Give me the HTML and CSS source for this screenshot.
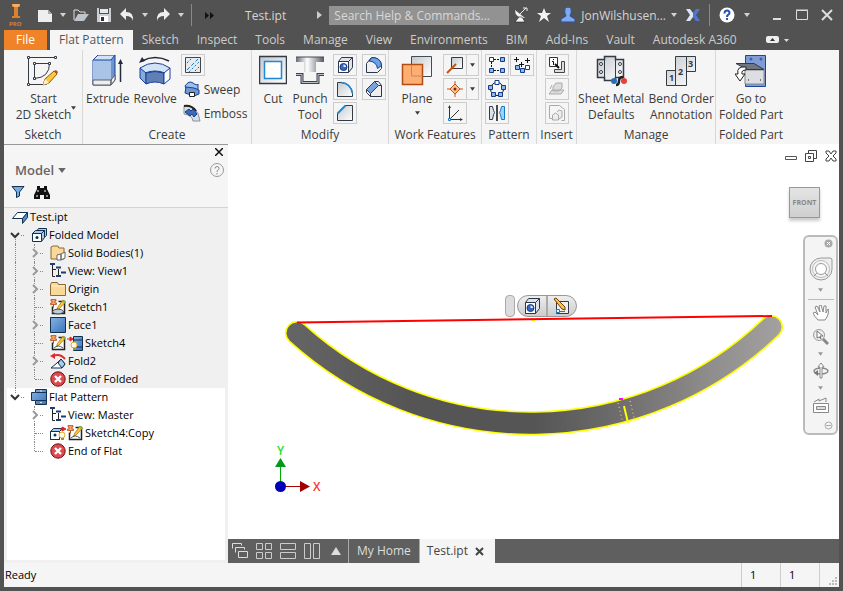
FILE: index.html
```html
<!DOCTYPE html>
<html lang="en">
<head>
    <meta charset="UTF-8">
    <meta name="viewport" content="width=device-width, initial-scale=1.0">
    <title>Test.ipt</title>
    <link rel="stylesheet" href="styles.css">
</head>
<body>

    <!-- Shared icons -->
    <svg class="defs" aria-hidden="true">
        <defs>
            <linearGradient id="steel" x1="0" y1="0" x2="1" y2="1"><stop offset="0" stop-color="#c4c8ce"/><stop offset="1" stop-color="#fff"/></linearGradient>
            <linearGradient id="metal"><stop offset="0" stop-color="#666b75"/><stop offset=".4" stop-color="#fff"/><stop offset="1" stop-color="#555a64"/></linearGradient>
            <linearGradient id="blue" x1="0" y1="0" x2="1" y2="1"><stop offset="0" stop-color="#86b2e4"/><stop offset="1" stop-color="#3b75b8"/></linearGradient>
            <symbol id="caret" viewBox="0 0 6 4"><path d="M0 0h6L3 4z" fill="currentColor"/></symbol>
            <symbol id="closed" viewBox="0 0 8 10"><path d="M2 1l4 4-4 4" fill="none" stroke="#999" stroke-width="2"/></symbol>
            <symbol id="open" viewBox="0 0 10 8"><path d="M1 2l4 4 4-4" fill="none" stroke="#333" stroke-width="2"/></symbol>
            <symbol id="hole" viewBox="0 0 18 18"><path d="M2.500 5.500l3-4h11v10l-4 5h-10z" fill="#dfe4ea" stroke="#2d3648"/><path d="M2.500 5.500h10v11h-10z" fill="#fff" stroke="#2d3648"/><path d="M12.500 5.500l4-4" stroke="#2d3648"/><circle cx="7.500" cy="11" r="3.500" fill="#3867bd" stroke="#163a8a"/><path d="M7.500 11V8.500a2.500 2.500 0 0 1 2.500 2.500z" fill="#dceaff"/></symbol>
            <symbol id="sketch" viewBox="0 0 16 16"><path d="M2.500 7.500v7h12v-12h-6" fill="#fff" stroke="#222" stroke-width="1.500"/><path d="M6.500 11.500l1-3L13 1l2.500 2L9 10z" fill="#ffc93c" stroke="#9a6500" stroke-width=".7"/><path d="M13 1l2.500 2-1 1.500-2.500-2z" fill="#8ab83c"/><path d="M4 13q4-4 9 0" fill="none" stroke="#555"/><path d="M1 .5h5v1.500H5v2h1.500V5.500h-6V4H2V2H1z" fill="#f7a468" stroke="#b4501a" stroke-width=".8"/><path d="M3.500 5.500v3" stroke="#b4501a"/></symbol>
            <symbol id="viewrep" viewBox="0 0 16 16"><path d="M2.500 2v11.500H5M3 6.500h3M8.500 6v6.500" fill="none" stroke="#222"/><path d="M0 1h5M6 4.500h5M6 13h5M11 9.500h5" stroke="#1f3c72" stroke-width="2"/></symbol>
            <symbol id="stop" viewBox="0 0 16 16"><circle cx="8" cy="8" r="7.200" fill="#dc4a50" stroke="#6f1118"/><path d="M5 5l6 6M11 5l-6 6" stroke="#fff" stroke-width="2.400"/></symbol>
            <symbol id="bulb" viewBox="0 0 8 10"><circle cx="4" cy="4" r="3" fill="#fffbe0" stroke="#e0ad35"/><path d="M3 8h3" stroke="#b98924" stroke-width="2"/></symbol>
            <symbol id="sheet" viewBox="0 0 16 16"><path d="M.5 3.500h4v-3h11v15h-11v-4h-4z" fill="url(#blue)" stroke="#12304f"/><path d="M5 3.500h10M5 11.500h10" stroke="#12304f"/><path d="M9 2h2M9 13.500h2" stroke="#dbe9f7"/></symbol>
        </defs>
    </svg>

    <!-- Title bar -->
    <header class="titlebar">
        <div class="qat">
            <button class="app" aria-label="Inventor Pro"><svg width="14" height="24" viewBox="0 0 14 24"><path d="M3 1h8v3H9v9h2v2H3v-2h2V4H3z" fill="#d8822f"/><path d="M3 1h8L9 4H5z" fill="#f3b06b"/><text x="0" y="23" class="pro">PRO</text></svg></button>
            <button aria-label="New"><svg width="16" height="16" viewBox="0 0 16 16"><path d="M1 3h10l4 4v8H1z" fill="#eee"/><path d="M11 3v4h4z" fill="#aaa"/></svg></button>
            <button class="drop" aria-label="New options"><svg width="6" height="4"><use href="#caret"/></svg></button>
            <button aria-label="Open"><svg width="16" height="16" viewBox="0 0 16 16"><path d="M1 13V3h4l2 2h5v2" fill="none" stroke="#ddd"/><path d="M1 14l4-7h11l-5 7z" fill="#bfc3ca"/></svg></button>
            <button aria-label="Save"><svg width="16" height="16" viewBox="0 0 16 16"><path d="M1 1h14v14H1z" fill="#ccd0d6"/><path d="M3 1h10v6H3z" fill="#525252"/><path d="M4 2h8v4H4z" fill="#e8e8e8"/><path d="M4 9h8v6H4z" fill="#fff"/><path d="M5 10h3v4H5z" fill="#333"/></svg></button>
            <button aria-label="Undo"><svg width="16" height="16" viewBox="0 0 16 16"><path d="M1 7l6-6v4q8 0 7 9-1-5-7-5v4z" fill="#eee"/></svg></button>
            <button class="drop" aria-label="Undo history"><svg width="6" height="4"><use href="#caret"/></svg></button>
            <button aria-label="Redo"><svg width="16" height="16" viewBox="0 0 16 16"><path d="M15 7L9 1v4Q1 5 2 14q1-5 7-5v4z" fill="#eee"/></svg></button>
            <button class="drop" aria-label="Redo history"><svg width="6" height="4"><use href="#caret"/></svg></button>
            <span class="sep"></span>
            <button class="more" aria-label="More"><svg width="9" height="7" viewBox="0 0 9 7"><path d="M0 0l4 3.500-4 3.500zM5 0l4 3.500-4 3.500z" fill="#111"/></svg></button>
        </div>
        <h1 class="title">Test.ipt</h1>
        <div class="help">
            <svg width="5" height="8" viewBox="0 0 5 8"><path d="M0 0l5 4-5 4z" fill="#ccc"/></svg>
            <input type="search" class="search" placeholder="Search Help &amp; Commands..." aria-label="Search Help &amp; Commands">
            <button aria-label="Communication Center"><svg width="14" height="16" viewBox="0 0 14 16"><path d="M1 3q0 8 10 8z" fill="#f4f4f4"/><path d="M5 10l-4 5h10l-3-5z" fill="#f4f4f4" stroke="#222" stroke-width=".6"/><path d="M6 7l6-6M9 1h4v3" fill="none" stroke="#eee"/></svg></button>
            <button aria-label="Favorites"><svg width="14" height="14" viewBox="0 0 14 14"><path d="M7 0l2 5h5l-4 3 2 6-5-4-5 4 2-6-4-3h5z" fill="#f4f4f4"/></svg></button>
            <button class="user"><svg width="16" height="16" viewBox="0 0 16 16"><path d="M5 1q3-2 6 0 1 5-1 8l5 3v3H1v-3l5-3Q4 6 5 1z" fill="#7fa9ee" stroke="#2d4f96"/></svg>JonWilshusen...<svg width="6" height="4"><use href="#caret"/></svg></button>
            <button aria-label="Exchange Apps"><svg width="14" height="12" viewBox="0 0 14 12"><path d="M0 0h4l3 4v4l-3 4H0l4-6z" fill="#dde6f7"/><path d="M14 0h-4L7 4v4l3 4h4l-4-6z" fill="#4f77d2"/></svg></button>
            <span class="sep"></span>
            <button aria-label="Help"><svg width="16" height="16" viewBox="0 0 16 16"><circle cx="8" cy="8" r="7.500" fill="#fff"/><path d="M5.500 6.500q0-3 2.500-3t2.500 2.500q0 1-1.500 2-1 .5-1 2" fill="none" stroke="#2654b4" stroke-width="2"/><path d="M7 11h2v2H7z" fill="#2654b4"/></svg></button>
            <button class="drop" aria-label="Help options"><svg width="6" height="4"><use href="#caret"/></svg></button>
        </div>
        <div class="winbtns">
            <button aria-label="Minimize"><svg width="12" height="12" viewBox="0 0 12 12"><path d="M2 10h8" stroke="#ddd" stroke-width="2"/></svg></button>
            <button aria-label="Maximize"><svg width="12" height="12" viewBox="0 0 12 12"><path d="M.5 1.500h11v9H.5zM0 1h12" fill="none" stroke="#ddd"/></svg></button>
            <button aria-label="Close"><svg width="12" height="12" viewBox="0 0 12 12"><path d="M1 1l10 10M11 1L1 11" stroke="#ddd" stroke-width="2"/></svg></button>
        </div>
    </header>

    <!-- Ribbon tabs -->
    <nav class="tabs">
        <a class="file" href="#">File</a>
        <a class="active" href="#">Flat Pattern</a>
        <a href="#">Sketch</a>
        <a href="#">Inspect</a>
        <a href="#">Tools</a>
        <a href="#">Manage</a>
        <a href="#">View</a>
        <a href="#">Environments</a>
        <a href="#">BIM</a>
        <a href="#">Add-Ins</a>
        <a href="#">Vault</a>
        <a href="#">Autodesk A360</a>
        <button class="collapse" aria-label="Collapse ribbon"><svg width="23" height="8" viewBox="0 0 23 8"><rect width="13" height="7" rx="2" fill="#eee"/><path d="M4 5l2.500-3L9 5z" fill="#333"/><path d="M18 3h5l-2.500 3z" fill="#ddd"/></svg></button>
    </nav>

    <!-- Ribbon -->
    <section class="ribbon">
        <div class="group g-sketch">
            <div class="tools">
                <button class="big"><svg width="32" height="32" viewBox="0 0 32 32"><path d="M1.500 2.500h27M1.500 2.500v27h18M7.500 8.500h15M7.500 8.500v15M22.500 8.500q0 14-15 15" fill="none" stroke="#333b45"/><g fill="#fff" stroke="#333b45"><path d="M.5 1.500h2v2h-2zM27.500 1.500h2v2h-2zM.5 28.500h2v2h-2zM6.500 7.500h2v2h-2zM21.500 7.500h2v2h-2zM6.500 22.500h2v2h-2z"/></g><path d="M16 30l2-6 9-8 3 3-8 9z" fill="#ffc83a" stroke="#8a5a10"/><path d="M27 16l2-1 2 2-1 2z" fill="#a65237"/><path d="M18 24l4 4-6 2z" fill="#fff0cf"/></svg><span>Start<br>2D Sketch</span></button>
                <svg class="corner" width="5" height="4"><use href="#caret"/></svg>
            </div>
            <h2>Sketch</h2>
        </div>
        <div class="group g-create">
            <div class="tools">
                <button class="big"><svg width="32" height="32" viewBox="0 0 32 32"><path d="M1 5l5-5h17v25l-4 5H1z" fill="#6d94cb" stroke="#16409a"/><path d="M1 5h18v20H1z" fill="#a9c4e6"/><path d="M1 5l5-5h17l-4 5z" fill="#d3e2f4" stroke="#16409a"/><path d="M1 25h18v5H1zM19 25l4-5v5l-4 5z" fill="#eee" stroke="#59616c"/><path d="M28.500 27V7" stroke="#222b38" stroke-width="1.500"/><path d="M26 9l2.500-5L31 9z" fill="#222b38"/></svg><span>Extrude</span></button>
                <button class="big"><svg width="32" height="32" viewBox="0 0 32 32"><path d="M1 13q15-10 30 0l-5 5q-10-4-20 0z" fill="#d3e3f7" stroke="#16409a"/><path d="M1 13l6 5v11l-6-6z" fill="#87abd9" stroke="#16409a"/><path d="M7 18q9-3 18 0v11q-9-4-18 0z" fill="#6080b5" stroke="#16409a"/><path d="M25 18l6-5v11l-6 5z" fill="#fff" stroke="#16409a"/><path d="M3 6Q16-1 30 6" fill="none" stroke="#222b38" stroke-width="1.500"/><path d="M0 8l3-6 3 4z" fill="#222b38"/></svg><span>Revolve</span></button>
                <div class="stack">
                    <button class="sm" aria-label="Work surface"><svg width="16" height="16" viewBox="0 0 16 16"><path d="M.5.500h15v15H.5z" fill="#e6ebf0" stroke="#444"/><path d="M2 13L13 2" stroke="#1879c4" stroke-dasharray="4 2"/><path d="M2 6l4-4M10 14l4-4" stroke="#555" stroke-dasharray="2 2"/><path d="M4 15L15 4" stroke="#1879c4" stroke-dasharray="2 2"/></svg></button>
                    <button class="wide"><svg width="18" height="18" viewBox="0 0 18 18"><path d="M2 6Q6 0 10 3t5 1v5q-5 3-7 0l-4 2z" fill="#9dbfeb" stroke="#16409a"/><path d="M3 7l8 1 5 2v4l-5 2-9-3z" fill="#7297cf" stroke="#16409a"/><path d="M6.500 12.500h5v4h-5z" fill="#fff" stroke="#222"/></svg>Sweep</button>
                    <button class="wide"><svg width="18" height="18" viewBox="0 0 18 18"><path d="M1 2q14-1 16 15H10Q9 11 1 10z" fill="#d9dee5" stroke="#8a929c"/><path d="M1 2q8-1 12 5" fill="none" stroke="#222" stroke-width="2"/><path d="M2 8l4-3 2 2 2-2 4 5-3 3-2-3-2 2z" fill="#3d6cb7" stroke="#123a8c"/></svg>Emboss</button>
                </div>
            </div>
            <h2>Create</h2>
        </div>
        <div class="group g-modify">
            <div class="tools">
                <button class="big"><svg width="28" height="32" viewBox="0 0 28 32"><path d="M.5 1.500h27v27H.5z" fill="url(#steel)" stroke="#333b45" stroke-width="1.500"/><path d="M5.500 6.500h17v17h-17z" fill="#fff" stroke="#1e88d2" stroke-width="1.500"/></svg><span>Cut</span></button>
                <button class="big"><svg width="30" height="32" viewBox="0 0 30 32"><path d="M1 2h28v5H1zM9 7h12v10H9z" fill="url(#metal)"/><path d="M1 2h28" stroke="#454b57"/><path d="M1 19.500h6v8h16v-8h6" fill="none" stroke="#3d434c" stroke-width="3"/><path d="M1 19.500h6v8h16v-8h6" fill="none" stroke="#bbc0c8"/></svg><span>Punch<br>Tool</span></button>
                <div class="smgrid">
                    <button class="sm" aria-label="Hole"><svg width="18" height="18"><use href="#hole"/></svg></button>
                    <button class="sm" aria-label="Fillet"><svg width="18" height="18" viewBox="0 0 18 18"><path d="M1.500 7.500l5-6q9 0 10 8v3l-4 4h-11z" fill="#eef0f3" stroke="#2d3648"/><path d="M4 5l3-3.500q9 0 9.500 8l-4 3q-1-7-8.500-7.500z" fill="#6ba2e2" stroke="#16409a"/></svg></button>
                    <button class="sm" aria-label="Corner round"><svg width="18" height="18" viewBox="0 0 18 18"><path d="M1.500 2.500h4q10 1 11 11v3h-15z" fill="url(#steel)" stroke="#333b45"/><path d="M5 2.500q10 1 11.500 11" fill="none" stroke="#1e88d2" stroke-width="1.500"/></svg></button>
                    <button class="sm" aria-label="Chamfer"><svg width="18" height="18" viewBox="0 0 18 18"><path d="M1.500 9.500l8-8h4l3 4v11h-11l-4-4z" fill="#eee" stroke="#2d3648"/><path d="M1.500 9.500l8-8 4 4-8 8z" fill="#78a3dc" stroke="#16409a"/><path d="M5.500 13.500v3M13.500 5.500h3" stroke="#2d3648"/></svg></button>
                    <button class="sm" aria-label="Corner chamfer"><svg width="18" height="18" viewBox="0 0 18 18"><path d="M1.500 16.500v-7l8-8h7v15z" fill="url(#steel)" stroke="#333b45"/><path d="M1.500 9.500l8-8" stroke="#1e88d2" stroke-width="2"/></svg></button>
                </div>
            </div>
            <h2>Modify</h2>
        </div>
        <div class="group g-work">
            <div class="tools">
                <button class="big"><svg width="32" height="32" viewBox="0 0 32 32"><path d="M10.500 1.500h20v20h-20z" fill="url(#steel)" stroke="#434b56"/><path d="M1.500 9.500h20v20h-20z" fill="#ffae71" stroke="#b34c13" stroke-width="1.500"/><path d="M10.500 10v11h11" fill="none" stroke="#b88970"/></svg><span>Plane</span><svg width="5" height="4"><use href="#caret"/></svg></button>
                <div class="stack">
                    <div class="split"><button class="sm" aria-label="Axis"><svg width="18" height="18" viewBox="0 0 18 18"><path d="M5.500 1.500h11v11h-11z" fill="url(#steel)" stroke="#333b45"/><path d="M1 17l9-9" stroke="#c65314" stroke-width="2"/></svg></button><button class="arrow" aria-label="Axis options"><svg width="5" height="4"><use href="#caret"/></svg></button></div>
                    <div class="split"><button class="sm" aria-label="Point"><svg width="18" height="18" viewBox="0 0 18 18"><path d="M9 1v16M1 9h16" stroke="#c65314"/><path d="M9 4l5 5-5 5-5-5z" fill="#ffc28e" stroke="#c65314"/><circle cx="9" cy="9" r="1.500" fill="#7c2d08"/></svg></button><button class="arrow" aria-label="Point options"><svg width="5" height="4"><use href="#caret"/></svg></button></div>
                    <button class="sm" aria-label="UCS"><svg width="18" height="18" viewBox="0 0 18 18"><path d="M3.500 15V2M3 15.500h13M4 15L13 6" stroke="#333"/><path d="M2 4l1.500-3L5 4zM14 14l3 1.500-3 1.500z" fill="#333"/><path d="M2.500 14.500h2v2h-2z" fill="#fff" stroke="#1879c4"/></svg></button>
                </div>
            </div>
            <h2>Work Features</h2>
        </div>
        <div class="group g-pattern">
            <div class="tools">
                <div class="smgrid tight">
                    <button class="sm" aria-label="Rectangular"><svg width="18" height="18" viewBox="0 0 18 18"><path d="M6 3.500h6M3.500 6v6M6 14.500h6" fill="none" stroke="#111" stroke-dasharray="2 1"/><path d="M1.500 1.500h4v4h-4z" fill="#fff" stroke="#163a8a"/><path d="M12.500 1.500h4v4h-4zM1.500 12.500h4v4h-4zM12.500 12.500h4v4h-4z" fill="#8ab8ee" stroke="#163a8a"/></svg></button>
                    <button class="sm" aria-label="Sketch driven"><svg width="18" height="18" viewBox="0 0 18 18"><path d="M1 3.500h5M3.500 1v5M12 4.500h5M14.500 2v5M6 8.500h5M8.500 6v5" stroke="#111"/><path d="M2.500 9.500h4v4h-4zM7.500 12.500h4v4h-4z" fill="#8ab8ee" stroke="#163a8a"/><path d="M12.500 9.500h4v4h-4z" fill="#fff" stroke="#163a8a"/></svg></button>
                    <button class="sm" aria-label="Circular"><svg width="18" height="18" viewBox="0 0 18 18"><circle cx="9" cy="9" r="6.500" fill="none" stroke="#111"/><path d="M7 .5h4v4H7z" fill="#fff" stroke="#163a8a"/><path d="M.5 5.500h4v4h-4zM13.500 5.500h4v4h-4zM3.500 12.500h4v4h-4zM10.500 12.500h4v4h-4z" fill="#8ab8ee" stroke="#163a8a"/></svg></button>
                    <span></span>
                    <button class="sm" aria-label="Mirror"><svg width="18" height="18" viewBox="0 0 18 18"><path d="M1.500 2.500h3q1 5 2 6-1 1-2 7h-3z" fill="#dfe4ea" stroke="#333b45"/><path d="M16.500 2.500h-3q-1 5-2 6 1 1 2 7h3z" fill="#9ed3f5" stroke="#1879c4"/><path d="M9 1v16" stroke="#111" stroke-width="1.500"/></svg></button>
                </div>
            </div>
            <h2>Pattern</h2>
        </div>
        <div class="group g-insert">
            <div class="tools">
                <div class="stack">
                    <button class="sm" aria-label="Insert iFeature"><svg width="18" height="18" viewBox="0 0 18 18"><path d="M1.500 1.500h8v9h-8z" fill="#fff" stroke="#333"/><path d="M5.500 3v1M4 5.500h1.500V9" stroke="#111" fill="none"/><path d="M7 8l4 4" stroke="#111" stroke-width="2"/><path d="M13.500 5.500h3v11h-10v-3h7z" fill="#ddd" stroke="#444"/></svg></button>
                    <button class="sm" aria-label="Insert object" disabled><svg width="18" height="18" viewBox="0 0 18 18"><path d="M1 14l3-4h12l-3 4zM5 7l3-4h6v5l-3 3H5zM2 9l2-4" fill="#ddd" stroke="#aaa"/></svg></button>
                    <button class="sm" aria-label="Import" disabled><svg width="18" height="18" viewBox="0 0 18 18"><path d="M1.500 1.500h10l5 4v11h-3M1.500 1.500v13h3" fill="none" stroke="#aaa"/><path d="M4.500 11l3-2 3 2v5h-6zM9 8l2-2 3 1v6l-3 2" fill="#eee" stroke="#aaa"/></svg></button>
                </div>
            </div>
            <h2>Insert</h2>
        </div>
        <div class="group g-manage">
            <div class="tools">
                <button class="big"><svg width="32" height="32" viewBox="0 0 32 32"><path d="M2.500 4.500h7v-3h11v3h8v18h-8v3h-11v-3h-7z" fill="url(#steel)" stroke="#333b45" stroke-width="1.500"/><path d="M9.500 4v19M20.500 4v19" stroke="#333b45"/><g fill="#fff" stroke="#333b45"><circle cx="6" cy="9" r="1.500"/><circle cx="6" cy="17" r="1.500"/><circle cx="25" cy="9" r="1.500"/><circle cx="25" cy="17" r="1.500"/></g><circle cx="19" cy="26" r="3" fill="#2472bd"/><circle cx="29" cy="26" r="3" fill="#e8403a"/><path d="M21 30q3 0 3-4t4-4" fill="none" stroke="#222" stroke-width="2.500"/></svg><span>Sheet Metal<br>Defaults</span></button>
                <button class="big"><svg width="32" height="32" viewBox="0 0 32 32"><g fill="url(#steel)" stroke="#333b45"><path d="M1.500 15.500h9v15h-9zM10.500 1.500h11v29h-11zM21.500 1.500h9v15h-9z"/></g><g class="nums"><text x="4" y="26">1</text><text x="13" y="20">2</text><text x="23" y="12">3</text></g></svg><span>Bend Order<br>Annotation</span></button>
            </div>
            <h2>Manage</h2>
        </div>
        <div class="group g-folded">
            <div class="tools">
                <button class="big"><svg width="32" height="32" viewBox="0 0 32 32"><path d="M10.500.5h20v31h-20z" fill="#7f9cd6" stroke="#1b469d"/><path d="M10 15h19v14H10z" fill="#dcdee1" stroke="#888"/><path d="M1 8.500h18l10 6H12z" fill="#707680" stroke="#333b45"/><g fill="#415f9c"><circle cx="16" cy="4" r="1.500"/><circle cx="26" cy="4" r="1.500"/></g><path d="M13 25h1M25 25h1" stroke="#777" stroke-width="2"/><path d="M11 12q-10-1-8 7H0l5 7 5-7H7q-1-4 4-4z" fill="#fff" stroke="#222"/></svg><span>Go to<br>Folded Part</span></button>
            </div>
            <h2>Folded Part</h2>
        </div>
    </section>

    <main class="workspace">
        <!-- Model browser -->
        <aside class="browser">
            <div class="browser-head">
                <button class="x" aria-label="Close browser"><svg width="8" height="8" viewBox="0 0 8 8"><path d="M0 0l8 8M8 0L0 8" stroke="#111" stroke-width="1.500"/></svg></button>
                <div class="model">
                    <button>Model <svg width="8" height="5"><use href="#caret"/></svg></button>
                    <button aria-label="Help"><svg width="14" height="14" viewBox="0 0 14 14"><circle cx="7" cy="7" r="6.500" fill="none" stroke="#999"/><path d="M5 5.500q0-2 2-2t2 2q0 1-1 1.500-1 .5-1 2M7 10v1.500" fill="none" stroke="#888"/></svg></button>
                </div>
                <div class="filters">
                    <button aria-label="Filter"><svg width="14" height="12" viewBox="0 0 14 12"><path d="M1 .5h12L8.500 6v4l-3 1.500V6z" fill="#78a9e0" stroke="#12304f"/></svg></button>
                    <button aria-label="Find"><svg width="16" height="14" viewBox="0 0 16 14"><path d="M3 1h3v2h4V1h3v3l3 6v4h-6v-4H6v4H0v-4l3-6z" fill="#111"/><path d="M2 11h2M12 11h2M4 5v2M11 5v2" stroke="#fff"/></svg></button>
                </div>
            </div>
            <div class="tree">
                <div class="folded">
                    <div class="row root"><svg width="16" height="16" viewBox="0 0 16 16"><path d="M.5 9.500l5-6h10l-5 6z" fill="#fff" stroke="#12304f"/><path d="M10.500 9.500l5-6v5l-5 6z" fill="#4b8ed0" stroke="#12304f"/></svg>Test.ipt</div>
                    <div class="row"><i class="g1 first"><svg width="10" height="8"><use href="#open"/></svg></i><svg width="16" height="16" viewBox="0 0 16 16"><path d="M5.500 4.500l2-3h8v7l-5 4" fill="#a9cbed" stroke="#12304f"/><path d="M1.500 6.500h9v8h-9z" fill="#fff" stroke="#12304f"/><path d="M1.500 6.500l3-3h9l-3 3zM13.500 3.500v7l-3 4" fill="#a9cbed" stroke="#12304f"/><circle cx="6" cy="10.500" r="1.500" fill="#12304f"/></svg>Folded Model</div>
                    <div class="row"><i class="g1"></i><i class="g2"><svg width="8" height="10"><use href="#closed"/></svg></i><svg width="16" height="16" viewBox="0 0 16 16"><path d="M1 14V2l2-1h5l1 2h5v11z" fill="#f8d99a" stroke="#8a6a35"/><path d="M7 10l4-1v6H7zM11 9l4-2v6l-4 2z" fill="#fff" stroke="#666"/></svg>Solid Bodies(1)</div>
                    <div class="row"><i class="g1"></i><i class="g2"><svg width="8" height="10"><use href="#closed"/></svg></i><svg width="16" height="16"><use href="#viewrep"/></svg>View: View1</div>
                    <div class="row"><i class="g1"></i><i class="g2"><svg width="8" height="10"><use href="#closed"/></svg></i><svg width="16" height="16" viewBox="0 0 16 16"><path d="M.5 14.500v-11l1-2h6l1 2h7v11z" fill="#f8d99a" stroke="#8a6a35"/><path d="M2 5h12" stroke="#fff3d2"/></svg>Origin</div>
                    <div class="row"><i class="g1"></i><i class="g2"></i><svg width="16" height="16" viewBox="0 0 16 16"><use href="#sketch" width="16" height="16"/><path d="M2 13q2-3 6-3t6 3q-3 2-6 2t-6-2z" fill="#c3ccd5" stroke="#44505c"/></svg>Sketch1</div>
                    <div class="row"><i class="g1"></i><i class="g2"><svg width="8" height="10"><use href="#closed"/></svg></i><svg width="16" height="16" viewBox="0 0 16 16"><path d="M.5.5h15v15H.5z" fill="url(#blue)" stroke="#12304f"/></svg>Face1</div>
                    <div class="row"><i class="g1"></i><i class="g2"></i><svg width="16" height="16"><use href="#sketch"/></svg><svg width="16" height="16" viewBox="0 0 16 16"><path d="M6.500 1.500h9v14h-9z" fill="url(#blue)" stroke="#12304f"/><path d="M7 5h8M7 12h8" stroke="#12304f"/><path d="M0 4h4M3 2l3 2-3 2z" stroke="#d22" fill="#d22"/><use href="#bulb" x="3" y="6" width="8" height="10"/></svg>Sketch4</div>
                    <div class="row"><i class="g1"></i><i class="g2"><svg width="8" height="10"><use href="#closed"/></svg></i><svg width="16" height="16" viewBox="0 0 16 16"><path d="M1 15l6-5 4-4 4 5-3 4z" fill="#fff" stroke="#12304f"/><path d="M8 10l3-4 4 5-3 4z" fill="#a9cbed" stroke="#12304f"/><path d="M3 3q7-3 12 3" fill="none" stroke="#e32a2a" stroke-width="2"/><path d="M0 3l5-3v6z" fill="#e32a2a"/></svg>Fold2</div>
                    <div class="row"><i class="g1"></i><i class="g2 last"></i><svg width="16" height="16"><use href="#stop"/></svg>End of Folded</div>
                </div>
                <div class="flat">
                    <div class="row"><i class="g1 last"><svg width="10" height="8"><use href="#open"/></svg></i><svg width="16" height="16"><use href="#sheet"/></svg>Flat Pattern</div>
                    <div class="row"><i class="g0"></i><i class="g2"><svg width="8" height="10"><use href="#closed"/></svg></i><svg width="16" height="16"><use href="#viewrep"/></svg>View: Master</div>
                    <div class="row"><i class="g0"></i><i class="g2"></i><svg width="16" height="16" viewBox="0 0 16 16"><path d="M.5 6.500l3-3h9l-3 3v8h-9z" fill="#a9cbed" stroke="#12304f"/><path d="M.5 6.500h9v8h-9z" fill="#fff" stroke="#12304f"/><circle cx="5" cy="10" r="1.500" fill="#12304f"/><path d="M10 4h3M12 2l4 2-4 2z" stroke="#d22" fill="#d22"/><use href="#bulb" x="8" y="6" width="8" height="10"/></svg><svg width="16" height="16"><use href="#sketch"/></svg>Sketch4:Copy</div>
                    <div class="row"><i class="g0"></i><i class="g2 last"></i><svg width="16" height="16"><use href="#stop"/></svg>End of Flat</div>
                </div>
            </div>
        </aside>

        <div class="view">
            <!-- Graphics window -->
            <div class="canvas">
                <svg class="model-view" width="611" height="395" viewBox="0 0 611 395">
                    <defs>
                        <linearGradient id="body" gradientUnits="userSpaceOnUse" x1="58" y1="0" x2="555" y2="0">
                            <stop offset="0" stop-color="#656565"/><stop offset=".25" stop-color="#555"/><stop offset=".5" stop-color="#555"/><stop offset=".68" stop-color="#706e6e"/><stop offset=".85" stop-color="#8f8d8b"/><stop offset="1" stop-color="#a3a2a1"/>
                        </linearGradient>
                    </defs>
                    <path d="M69 189A348 348 0 0 0 543 183" fill="none" stroke="#ff0" stroke-width="24" stroke-linecap="round"/>
                    <path d="M69 189A348 348 0 0 0 543 183" fill="none" stroke="url(#body)" stroke-width="21" stroke-linecap="round"/>
                    <path d="M390 259l5 20M402 257l5 20" stroke="#ff0" stroke-dasharray="1 3"/>
                    <path d="M396 262l4 17" stroke="#ff0" stroke-width="2"/>
                    <path d="M391 255h4" stroke="#f0f" stroke-width="2"/>
                    <path d="M303 176h4" stroke="#ff0" stroke-width="2"/>
                    <path d="M69 178.500L544 172" stroke="#f00" stroke-width="2"/>
                    <path d="M52.500 342V323" stroke="#0a0"/><path d="M47 323l5.500-9 5.500 9z" fill="#009a18"/>
                    <path d="M52 342.500h20" stroke="#a00"/><path d="M72 337l10 5.500-10 5.500z" fill="#a00000"/>
                    <circle cx="52.500" cy="342.500" r="5.500" fill="#0000b8"/>
                    <text class="axis-y" x="49" y="311">Y</text>
                    <text class="axis-x" x="85" y="347">X</text>
                </svg>
                <div class="docbtns">
                    <button aria-label="Minimize view"><svg width="12" height="12" viewBox="0 0 12 12"><path d="M.5 6.500h11v3H.5z" fill="#fff" stroke="#555"/></svg></button>
                    <button aria-label="Restore view"><svg width="12" height="12" viewBox="0 0 12 12"><path d="M3.500 3V.5h8v8H9M.5 3.500h8v8h-8zM3.500 6.500h2v2h-2z" fill="none" stroke="#444"/></svg></button>
                    <button aria-label="Close view"><svg width="12" height="12" viewBox="0 0 12 12"><path d="M1 1h3l2 3 2-3h3v2L8 6l3 3v2H8L6 8l-2 3H1V9l3-3-3-3z" fill="#fff" stroke="#444"/></svg></button>
                </div>
                <button class="cube">FRONT</button>
                <div class="mini">
                    <span class="grip"></span>
                    <div class="pill">
                        <button aria-label="Extrude"><svg width="18" height="18"><use href="#hole"/></svg></button>
                        <button aria-label="Edit sketch"><svg width="18" height="18" viewBox="0 0 18 18"><path d="M3.500 4.500h12v12h-12z" fill="#eee" stroke="#333b45"/><path d="M5 14.500h7" stroke="#1879c4"/><path d="M3.500 12.500h3v3h-3z" fill="#fff" stroke="#1879c4"/><path d="M1 2l2-1 9 9v3l-3-1z" fill="#ffc83a" stroke="#6b3d10"/></svg></button>
                    </div>
                </div>
                <div class="nav">
                    <button class="nav-x" aria-label="Close navigation bar"><svg width="9" height="9" viewBox="0 0 9 9"><circle cx="4.500" cy="4.500" r="4" fill="#aaa"/><path d="M3 3l3 3M6 3L3 6" stroke="#fff"/></svg></button>
                    <button aria-label="Steering wheel"><svg width="24" height="24" viewBox="0 0 24 24"><path d="M12 1h9q2 0 2 2v9A11 11 0 1 1 12 1z" fill="#eee" stroke="#999"/><circle cx="12" cy="12" r="8.500" fill="#f6f6f6" stroke="#bbb"/><circle cx="12" cy="12" r="5.500" fill="#fff" stroke="#999"/><path d="M8 16l-3 3M16 16l3 3" stroke="#999"/></svg></button>
                    <svg class="nav-caret" width="5" height="4"><use href="#caret"/></svg>
                    <hr>
                    <button aria-label="Pan"><svg width="16" height="16" viewBox="0 0 16 16"><path d="M5 15q-4-4-5-7l2-1 3 3-3-8 2-1 3 6-1-6 2-1 2 7 1-6h2v7l2-4 1 1q-1 7-4 10z" fill="#fff" stroke="#888"/></svg></button>
                    <button aria-label="Zoom"><svg width="16" height="16" viewBox="0 0 16 16"><circle cx="6" cy="6" r="5.500" fill="#eee" stroke="#999"/><path d="M10 10l5 5" stroke="#888" stroke-width="3"/><path d="M4 2l6 5H7l1 3-2-2-2 1z" fill="#fff" stroke="#777"/></svg></button>
                    <svg class="nav-caret" width="5" height="4"><use href="#caret"/></svg>
                    <button aria-label="Orbit"><svg width="16" height="16" viewBox="0 0 16 16"><ellipse cx="8" cy="8" rx="7" ry="3" fill="none" stroke="#888" stroke-width="1.500"/><path d="M7 15V4H5l3-4 3 4H9v11z" fill="#fff" stroke="#888"/><path d="M1 10l4-3v6z" fill="#777"/></svg></button>
                    <svg class="nav-caret" width="5" height="4"><use href="#caret"/></svg>
                    <button aria-label="Look at"><svg width="16" height="16" viewBox="0 0 16 16"><path d="M.5 6.500h15v9H.5z" fill="#fff" stroke="#888"/><path d="M3.500 9.500h9v3h-9z" fill="#ddd" stroke="#888"/><path d="M1 5l5-3v2l7-3v4" fill="none" stroke="#888"/></svg></button>
                    <button class="nav-min" aria-label="Navigation bar options"><svg width="9" height="9" viewBox="0 0 9 9"><circle cx="4.500" cy="4.500" r="3.500" fill="none" stroke="#aaa"/><path d="M2 4.500h5" stroke="#aaa"/></svg></button>
                </div>
            </div>

            <!-- Document tabs -->
            <div class="dock">
                <div class="arrange">
                    <button aria-label="Cascade"><svg width="16" height="16" viewBox="0 0 16 16"><path d="M.5 5.500v-5h9v2M3.500 9.500v-5h9v2M6.500 8.500h9v6h-9z" fill="none" stroke="#ddd"/></svg></button>
                    <button aria-label="Tile"><svg width="16" height="16" viewBox="0 0 16 16"><path d="M.5.500h6v6h-6zM9.500.500h6v6h-6zM.5 9.500h6v6h-6zM9.500 9.500h6v6h-6z" fill="none" stroke="#ccc"/></svg></button>
                    <button aria-label="Tile horizontally"><svg width="16" height="16" viewBox="0 0 16 16"><path d="M.5.500h15v6H.5zM.5 9.500h15v6H.5z" fill="none" stroke="#ccc"/></svg></button>
                    <button aria-label="Tile vertically"><svg width="16" height="16" viewBox="0 0 16 16"><path d="M.5.500h6v15h-6zM9.500.500h6v15h-6z" fill="none" stroke="#ccc"/></svg></button>
                    <button aria-label="Open documents"><svg width="16" height="16" viewBox="0 0 16 16"><path d="M3 12l5-8 5 8z" fill="#ddd"/></svg></button>
                </div>
                <a href="#">My Home</a>
                <a class="current" href="#">Test.ipt <svg width="9" height="9" viewBox="0 0 9 9"><path d="M1 1l7 7M8 1L1 8" stroke="#444" stroke-width="2"/></svg></a>
            </div>
        </div>
    </main>

    <footer class="status">
        <span class="msg">Ready</span>
        <span class="count">1</span>
        <span class="count">1</span>
        <span class="size"><svg width="8" height="9" viewBox="0 0 8 9"><path d="M6 0h2v2H6zM3 3h2v2H3zM6 3h2v2H6zM0 6h2v2H0zM3 6h2v2H3zM6 6h2v2H6z" fill="#bbb"/></svg></span>
    </footer>

</body>
</html>
```
FILE: styles.css
```css
* {
    box-sizing: border-box;
}

body {
    margin: 0;
    padding: 0 4px 4px;
    height: 100vh;
    display: flex;
    flex-direction: column;
    background: #525252;
    color: #3c3c3c;
    font-family: "Open Sans", "Noto Sans", sans-serif;
    font-size: 12px;
    overflow: hidden;
}

.defs {
    position: absolute;
    width: 0;
    height: 0;
}

svg {
    display: block;
    flex: none;
}

button {
    padding: 0;
    border: none;
    background: none;
    color: inherit;
    font: inherit;
}

a {
    color: inherit;
    text-decoration: none;
}

h1, h2 {
    margin: 0;
    font-size: 12px;
    font-weight: normal;
}

/* Title bar */
.titlebar {
    display: flex;
    align-items: center;
    height: 30px;
    flex: none;
    color: #d4d4d4;
}

.qat, .help, .winbtns {
    display: flex;
    align-items: center;
}

.qat {
    gap: 7px;
    padding-left: 5px;
}

.app {
    margin-right: 7px;
}

.more {
    margin-left: 6px;
}

.pro {
    font-size: 6px;
    font-weight: bold;
    fill: #d8822f;
}

.sep {
    width: 1px;
    height: 22px;
    background: #888;
}

.title {
    flex: 1;
    text-align: center;
}

.help {
    gap: 9px;
}

.search {
    width: 180px;
    height: 19px;
    margin: 0 -4px 0 -2px;
    padding: 0 5px;
    border: none;
    background: #929292;
    color: #eee;
    font: inherit;
}

.search::placeholder {
    color: #d8d8d8;
}

.user {
    display: flex;
    align-items: center;
    gap: 5px;
}

.winbtns {
    gap: 13px;
    padding: 0 6px 0 21px;
}

/* Ribbon tabs */
.tabs {
    display: flex;
    height: 20px;
    flex: none;
    line-height: 20px;
    color: #ccc;
    white-space: nowrap;
}

.tabs a {
    padding: 0 9px;
}

.tabs .file {
    padding: 0 12px;
    margin-right: 3px;
    background: #f08327;
    color: #fff;
}

.tabs .active {
    background: #f5f5f5;
    color: #555;
}

.collapse {
    margin-left: 20px;
}

/* Ribbon */
.ribbon {
    display: flex;
    height: 94px;
    flex: none;
    background: #f5f5f5;
}

.group {
    display: flex;
    flex-direction: column;
    flex: none;
    padding: 4px 0 0;
    border-right: 1px solid #d8d8d8;
}

.group h2 {
    line-height: 17px;
    text-align: center;
    white-space: nowrap;
}

.g-sketch { width: 79px; }
.g-create { width: 169px; }
.g-modify { width: 137px; }
.g-work { width: 93px; }
.g-pattern { width: 55px; }
.g-insert { width: 40px; }
.g-manage { width: 139px; }
.g-folded { width: 70px; border: none; }

.tools {
    display: flex;
    justify-content: center;
    height: 72px;
    gap: 4px;
}

.big {
    display: flex;
    flex-direction: column;
    align-items: center;
    gap: 4px;
    padding-top: 1px;
    line-height: 16px;
    white-space: nowrap;
}

.corner {
    align-self: flex-end;
    margin: 0 -2px 16px -4px;
}

.stack {
    display: flex;
    flex-direction: column;
    align-items: flex-start;
    gap: 2px;
}

.smgrid {
    display: grid;
    grid-template-columns: 24px 24px;
    grid-auto-rows: 22px;
    gap: 2px 5px;
}

.smgrid.tight {
    column-gap: 1px;
}

.sm, .arrow {
    display: flex;
    align-items: center;
    justify-content: center;
    width: 24px;
    height: 22px;
    border: 1px solid #ccc;
}

.arrow {
    width: 12px;
    border-left: none;
}

.split {
    display: flex;
}

.wide {
    display: flex;
    align-items: center;
    gap: 3px;
    height: 22px;
    padding-left: 2px;
}

.g-sketch .tools {
    padding-left: 4px;
}

.g-create .tools {
    justify-content: flex-start;
    padding-left: 3px;
}

.g-modify .tools,
.g-work .tools {
    justify-content: flex-end;
    padding-right: 2px;
}

.g-modify .tools {
    justify-content: space-between;
    padding-left: 7px;
}

.g-work .tools {
    gap: 10px;
}

/* Workspace */
.workspace {
    display: flex;
    flex: 1;
    min-height: 0;
}

.browser {
    display: flex;
    flex-direction: column;
    width: 224px;
    flex: none;
    padding: 0 3px 3px;
    border-top: 1px solid #999;
    background: #f0f0f0;
}

.browser-head {
    height: 63px;
    flex: none;
    margin: 0 -3px;
    padding: 3px 4px 0 7px;
    background: #f5f5f5;
    border-bottom: 1px solid #d4d4d4;
}

.x {
    display: block;
    margin: 0 1px 5px auto;
}

.model {
    display: flex;
    justify-content: space-between;
    align-items: center;
    padding-left: 4px;
    font-weight: 600;
    font-size: 13px;
    line-height: 18px;
    color: #666;
}

.model button {
    display: flex;
    align-items: center;
    gap: 4px;
}

.filters {
    display: flex;
    align-items: center;
    gap: 9px;
    padding-top: 6px;
}

.tree {
    flex: 1;
    background: #fff;
    color: #000;
    font-size: 11px;
    line-height: 16px;
}

.folded {
    background: #f0f0f0;
}

.row {
    display: flex;
    align-items: center;
    height: 18px;
    white-space: nowrap;
}

.row > svg {
    margin-right: 2px;
}

.row > svg + svg {
    margin-left: -1px;
}

.root {
    padding-left: 5px;
}

/* dotted guides, g1 for the first level and g2 for the second */
.g0, .g1, .g2 {
    position: relative;
    display: flex;
    align-items: center;
    flex: none;
    height: 18px;
    width: 24px;
}

.g1 {
    padding-left: 3px;
}

.g2 {
    width: 19px;
}

.g1::before, .g2::before {
    content: "";
    position: absolute;
    top: 0;
    bottom: 0;
    left: 8px;
    border-left: 1px dotted #888;
}

.g2::before {
    left: 3px;
}

.g2::after, .g1.first::after, .g1.last::after {
    content: "";
    position: absolute;
    left: 4px;
    right: 7px;
    top: 9px;
    border-top: 1px dotted #888;
}

.g1.first::before {
    top: 9px;
}

.g1.last::before, .g2.last::before {
    bottom: 9px;
}

.g1 svg, .g2 svg {
    position: relative;
    z-index: 1;
    background: #f0f0f0;
}

.flat .g1 svg, .flat .g2 svg {
    background: #fff;
}

/* Graphics window */
.view {
    display: flex;
    flex-direction: column;
    flex: 1;
    min-width: 0;
}

.canvas {
    position: relative;
    flex: 1;
    overflow: hidden;
    background: #fff;
}

.model-view {
    position: absolute;
    left: 0;
    top: 0;
}

.axis-x, .axis-y {
    font-size: 12px;
    font-weight: 600;
    fill: #f33;
}

.axis-y {
    fill: #2d2;
}

.nums {
    font-size: 9px;
    font-weight: bold;
    fill: #333b45;
}

.docbtns {
    position: absolute;
    top: 6px;
    right: 2px;
    display: flex;
    gap: 8px;
}

.cube {
    position: absolute;
    top: 43px;
    right: 19px;
    width: 31px;
    height: 31px;
    border: 1px solid #999;
    background: linear-gradient(#e4e4e4, #cfcfcf);
    box-shadow: 0 3px 3px #ccc;
    color: #888;
    font-size: 7px;
    font-weight: bold;
}

.mini {
    position: absolute;
    left: 277px;
    top: 151px;
    display: flex;
    gap: 2px;
}

.grip {
    width: 10px;
    height: 22px;
    border: 1px solid #aaa;
    border-radius: 4px;
    background: #ddd;
}

.pill {
    display: flex;
    height: 22px;
    border: 1px solid #999;
    border-radius: 11px;
    background: linear-gradient(#eee, #ccc);
    overflow: hidden;
}

.pill button {
    padding: 0 5px;
}

.pill button + button {
    border-left: 2px solid #aaa;
}

.nav {
    position: absolute;
    top: 91px;
    right: 1px;
    display: flex;
    flex-direction: column;
    align-items: center;
    width: 35px;
    height: 200px;
    padding: 2px 0 3px;
    border: 2px solid #bbb;
    border-radius: 6px;
    background: #f4f4f4;
    color: #999;
}

.nav-x, .nav-min {
    align-self: flex-end;
    margin-right: 3px;
}

.nav-caret {
    margin: 7px 0;
}

.nav hr {
    width: 26px;
    margin: 0 0 5px;
    border: none;
    border-top: 1px solid #bbb;
}

.nav button + button {
    margin-top: 8px;
}

.nav .nav-x + button {
    margin-top: 9px;
}

.nav .nav-min {
    margin-top: auto;
}

/* Document tabs */
.dock {
    display: flex;
    height: 24px;
    flex: none;
    background: #5f5f5f;
    color: #ddd;
    line-height: 24px;
}

.arrange {
    display: flex;
    align-items: center;
    gap: 8px;
    padding: 0 4px;
}

.dock a {
    display: flex;
    align-items: center;
    gap: 7px;
    padding: 0 8px;
    border-left: 1px solid #aaa;
}

.dock .current {
    padding: 0 11px 0 7px;
    background: #f5f5f5;
    color: #444;
}

/* Status bar */
.status {
    display: flex;
    height: 24px;
    flex: none;
    background: #f5f5f5;
    color: #000;
    font-size: 11px;
    line-height: 24px;
}

.msg {
    flex: 1;
    padding-left: 1px;
}

.count {
    width: 39px;
    padding-left: 8px;
    border-left: 1px solid #ccc;
}

.size {
    display: flex;
    align-items: flex-end;
    padding: 0 2px 1px 9px;
    border-left: 1px solid #ccc;
}
```
